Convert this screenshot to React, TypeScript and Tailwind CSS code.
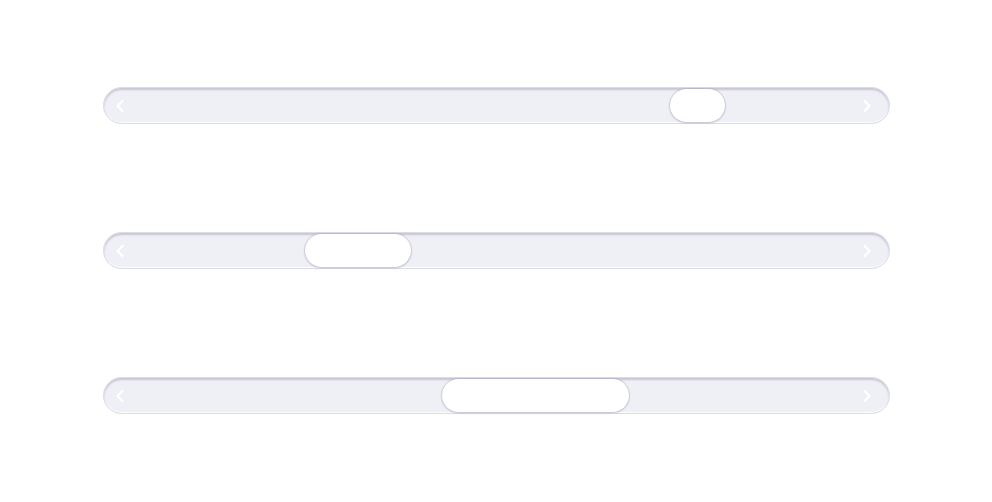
import React from 'react';

type Bar = { left: number; width: number };

const bars: Bar[] = [
  { left: 567, width: 55 },
  { left: 202, width: 106 },
  { left: 339, width: 187 },
];

const Chevron: React.FC<{ dir: 'left' | 'right' }> = ({ dir }) => (
  <svg width="10" height="14" viewBox="0 0 10 14" fill="none">
    <path
      d={dir === 'left' ? 'M7.5 2 L2.5 7 L7.5 12' : 'M2.5 2 L7.5 7 L2.5 12'}
      stroke="white"
      strokeWidth="2.2"
      strokeLinecap="round"
      strokeLinejoin="round"
    />
  </svg>
);

const ScrollBar: React.FC<Bar> = ({ left, width }) => (
  <div className="relative flex h-[37px] w-[787px] items-center rounded-full bg-[#efeff6] shadow-[inset_0_2px_2px_rgba(120,120,150,0.35),inset_0_-1px_1px_rgba(255,255,255,0.9),0_1px_1px_rgba(255,255,255,1)] border border-[#dcdce6]">
    <span className="absolute left-[11px] top-1/2 -translate-y-1/2">
      <Chevron dir="left" />
    </span>
    <span className="absolute right-[17px] top-1/2 -translate-y-1/2">
      <Chevron dir="right" />
    </span>
    <div
      className="h-[33px] rounded-full bg-white shadow-[0_0_1px_1px_rgba(160,160,185,0.35),0_1px_2px_rgba(120,120,150,0.3)]"
      style={{ marginLeft: left - 1, width }}
    />
  </div>
);

export default function App() {
  return (
    <div className="min-h-screen w-full bg-white pl-[103px] pt-[87px]">
      <div className="flex flex-col gap-[108px]">
        {bars.map((b, i) => (
          <ScrollBar key={i} {...b} />
        ))}
      </div>
    </div>
  );
}
